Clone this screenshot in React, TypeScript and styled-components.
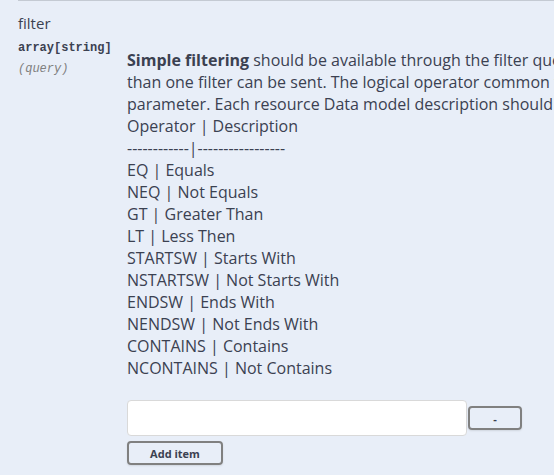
import React from "react";
import styled, { createGlobalStyle } from "styled-components";

const Global = createGlobalStyle`
  html, body { margin: 0; padding: 0; background: #e8eef8; overflow: hidden; }
  body { font-family: "Open Sans", sans-serif; color: #3b4151; }
`;

const Page = styled.div`
  width: 554px;
  height: 475px;
  overflow: hidden;
  padding-left: 18px;
  box-sizing: border-box;
`;

const Row = styled.div`
  display: flex;
  border-top: 1px solid #c4cad3;
  width: 900px;
`;

const NameCol = styled.div`
  width: 109px;
  flex: none;
  padding-top: 12px;
  display: flex;
  flex-direction: column;
`;

const ParamName = styled.div`
  font-size: 15px;
  line-height: 20px;
  color: #3b4151;
`;

const ParamType = styled.div`
  margin-top: 7px;
  font-family: "Liberation Mono", "DejaVu Sans Mono", monospace;
  font-size: 12px;
  font-weight: 700;
  line-height: 16px;
  color: #3b4151;
`;

const ParamIn = styled.div`
  margin-top: 5px;
  font-family: "Liberation Mono", "DejaVu Sans Mono", monospace;
  font-size: 12px;
  font-style: italic;
  line-height: 16px;
  color: #808080;
`;

const DescCol = styled.div`
  padding-top: 48px;
  display: flex;
  flex-direction: column;
`;

const Markdown = styled.p`
  margin: 0;
  font-size: 16px;
  line-height: 22px;
  white-space: nowrap;
  color: #3b4151;
  strong { font-weight: 700; }
`;

const ItemRow = styled.div`
  margin-top: 21px;
  display: flex;
  align-items: center;
`;

const TextInput = styled.input`
  width: 340px;
  height: 36px;
  box-sizing: border-box;
  background: #fff;
  border: 1px solid #d9d9d9;
  border-radius: 4px;
  padding: 8px 10px;
  font-family: "Open Sans", sans-serif;
  font-size: 14px;
  outline: none;
`;

const Btn = styled.button<{ $w: number }>`
  width: ${(p) => p.$w}px;
  height: 24px;
  box-sizing: border-box;
  background: transparent;
  border: 2px solid #808080;
  border-radius: 4px;
  font-family: "Open Sans", sans-serif;
  font-size: 11px;
  font-weight: 700;
  color: #3b4151;
  padding: 0;
  display: flex;
  align-items: center;
  justify-content: center;
  box-shadow: 0 1px 2px rgba(0, 0, 0, 0.1);
`;

const RemoveBtn = styled(Btn)`
  margin-left: 1px;
`;

const AddBtn = styled(Btn)`
  margin-top: 5px;
`;

const lines = [
  "Operator | Description",
  "------------|-----------------",
  "EQ | Equals",
  "NEQ | Not Equals",
  "GT | Greater Than",
  "LT | Less Then",
  "STARTSW | Starts With",
  "NSTARTSW | Not Starts With",
  "ENDSW | Ends With",
  "NENDSW | Not Ends With",
  "CONTAINS | Contains",
  "NCONTAINS | Not Contains",
];

export default function App() {
  return (
    <>
      <Global />
      <Page>
        <Row>
          <NameCol>
            <ParamName>filter</ParamName>
            <ParamType>array[string]</ParamType>
            <ParamIn>(query)</ParamIn>
          </NameCol>
          <DescCol>
            <Markdown>
              <strong>Simple filtering</strong> should be available through the filter query string parameter. More
              <br />
              than one filter can be sent. The logical operator common for all filters is AND, passed through the
              <br />
              parameter. Each resource Data model description should list the operators it supports.
              {lines.map((l, i) => (
                <React.Fragment key={i}>
                  <br />
                  {l}
                </React.Fragment>
              ))}
            </Markdown>
            <ItemRow>
              <TextInput type="text" />
              <RemoveBtn $w={54}>-</RemoveBtn>
            </ItemRow>
            <div>
              <AddBtn $w={96}>Add item</AddBtn>
            </div>
          </DescCol>
        </Row>
      </Page>
    </>
  );
}
